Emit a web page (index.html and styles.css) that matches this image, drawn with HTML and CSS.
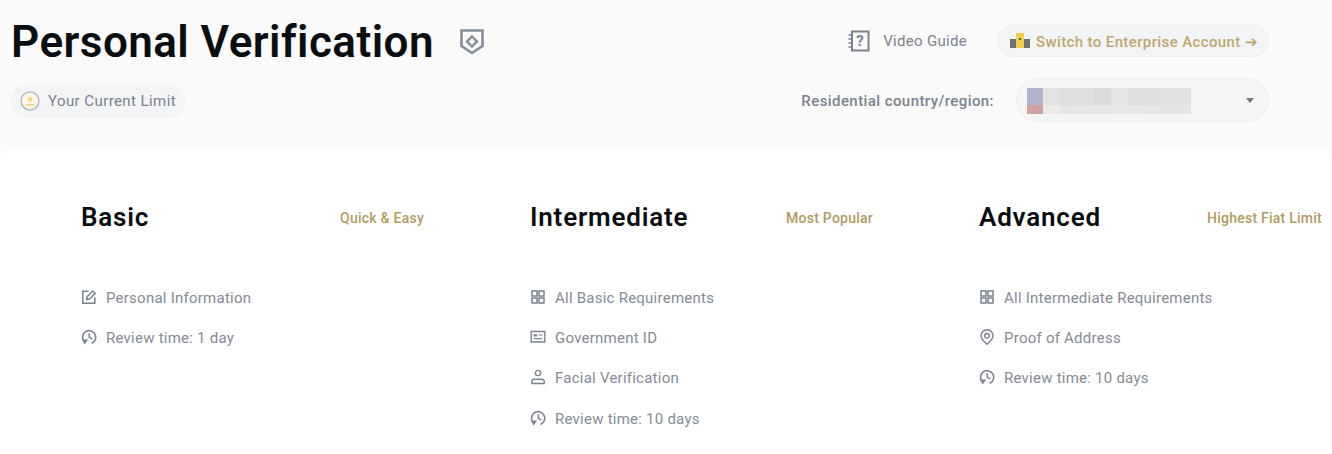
FILE: index.html
```html
<!DOCTYPE html>
<html>

<head>
    <meta charset="UTF-8">
    <title>Personal Verification</title>
    <link rel="stylesheet" href="styles.css">
</head>

<body>
    <svg class="icon-defs" width="0" height="0">
        <symbol id="i-edit" viewBox="0 0 16 16">
            <path d="M7.500 2.200H1.800v12h12V8.500" fill="none" stroke="currentColor" stroke-width="1.600" />
            <path d="M5.600 10.600l.5-3 5.600-5.600 2.500 2.500-5.600 5.600z" fill="none" stroke="currentColor" stroke-width="1.500" />
        </symbol>
        <symbol id="i-clock" viewBox="0 0 16 16">
            <path d="M3.700 13.200A6.600 6.600 0 1 1 10.500 14.400" fill="none" stroke="currentColor" stroke-width="1.600" />
            <path d="M1 10.400l6.200.2-3.600 5z" fill="currentColor" />
            <path d="M8.200 4.200v4l3 2" fill="none" stroke="currentColor" stroke-width="1.500" />
        </symbol>
        <symbol id="i-grid" viewBox="0 0 16 16">
            <path d="M2 2h5v5H2zM9 2h5v5H9zM2 9h5v5H2zM9 9h5v5H9z" fill="none" stroke="currentColor" stroke-width="1.500" />
        </symbol>
        <symbol id="i-card" viewBox="0 0 16 16">
            <path d="M1.200 2.500h13.600v10.500H1.200z" fill="none" stroke="currentColor" stroke-width="1.400" />
            <path d="M3.600 5.200h3.400v2.200H3.600zM8.400 5.400h4v1.200h-4zM3.600 9h8.800v1.200H3.600z" fill="currentColor" />
        </symbol>
        <symbol id="i-user" viewBox="0 0 16 16">
            <circle cx="8" cy="4" r="2.600" fill="none" stroke="currentColor" stroke-width="1.400" />
            <path d="M1.800 14.500v-2c0-1.300 1-2.300 2.300-2.300h7.800c1.300 0 2.300 1 2.300 2.300v2z" fill="none" stroke="currentColor" stroke-width="1.400" />
        </symbol>
        <symbol id="i-pin" viewBox="0 0 16 16">
            <path d="M8 15.200C4.800 12.600 2 10 2 6.800a6 6 0 0 1 12 0C14 10 11.200 12.600 8 15.200z" fill="none" stroke="currentColor" stroke-width="1.400" />
            <circle cx="8" cy="6.800" r="2.300" fill="none" stroke="currentColor" stroke-width="1.400" />
        </symbol>
    </svg>

    <header class="top">
        <div class="top-row first">
            <div class="title-wrap">
                <h1>Personal Verification</h1>
                <svg class="shield" viewBox="0 0 24 26">
                    <path d="M1.500 1.500h21v15.500L12 24 1.500 17z" fill="none" stroke="#868e9a" stroke-width="2.600" />
                    <path d="M12 7.500l5 5-5 5-5-5z" fill="none" stroke="#868e9a" stroke-width="2.400" />
                </svg>
            </div>
            <div class="top-actions">
                <a class="guide">
                    <svg class="guide-icon" viewBox="0 0 22 22">
                        <path d="M4 1.500h16.500v19H4z" fill="none" stroke="#7b838f" stroke-width="2" />
                        <path d="M0.500 5h4M0.500 9h4M0.500 13h4M0.500 17h4" stroke="#7b838f" stroke-width="1.600" />
                        <text x="12.200" y="16" class="guide-mark">?</text>
                    </svg>
                    <span>Video Guide</span>
                </a>
                <a class="switch-pill">
                    <svg class="building" viewBox="0 0 20 16">
                        <path d="M0 6h6v9H0zM14 6h6v9h-6z" fill="#6f7273" />
                        <path d="M6 0h8v15H6z" fill="#ecd04e" />
                        <path d="M9 5h2v2H9z" fill="#5f5a3a" />
                    </svg>
                    <span class="switch-text">Switch to Enterprise Account ➔</span>
                </a>
            </div>
        </div>
        <div class="top-row second">
            <a class="limit-pill">
                <span class="avatar">
                    <svg viewBox="0 0 20 20">
                        <circle cx="10" cy="10" r="9" fill="#fbf6e4" stroke="#b7bcc4" stroke-width="1.500" />
                        <circle cx="10" cy="8.300" r="2.400" fill="#efd98a" />
                        <path d="M5.800 13h8.400v1.500H5.800z" fill="#efd98a" />
                    </svg>
                </span>
                <span>Your Current Limit</span>
            </a>
            <div class="region">
                <span class="region-label">Residential country/region:</span>
                <div class="region-select">
                    <div class="blur">
                        <div class="blur-flag"><i class="flag-top"></i><i class="flag-bottom"></i></div>
                        <div class="blur-name"></div>
                    </div>
                    <span class="caret"></span>
                </div>
            </div>
        </div>
    </header>

    <main class="levels">
        <section class="level">
            <div class="level-head">
                <h2>Basic</h2>
                <span class="tag">Quick &amp; Easy</span>
            </div>
            <ul>
                <li><svg><use href="#i-edit" /></svg>Personal Information</li>
                <li><svg><use href="#i-clock" /></svg>Review time: 1 day</li>
            </ul>
        </section>
        <section class="level">
            <div class="level-head">
                <h2>Intermediate</h2>
                <span class="tag">Most Popular</span>
            </div>
            <ul>
                <li><svg><use href="#i-grid" /></svg>All Basic Requirements</li>
                <li><svg><use href="#i-card" /></svg>Government ID</li>
                <li><svg><use href="#i-user" /></svg>Facial Verification</li>
                <li class="last"><svg><use href="#i-clock" /></svg>Review time: 10 days</li>
            </ul>
        </section>
        <section class="level">
            <div class="level-head">
                <h2>Advanced</h2>
                <span class="tag">Highest Fiat Limit</span>
            </div>
            <ul>
                <li><svg><use href="#i-grid" /></svg>All Intermediate Requirements</li>
                <li><svg><use href="#i-pin" /></svg>Proof of Address</li>
                <li><svg><use href="#i-clock" /></svg>Review time: 10 days</li>
            </ul>
        </section>
    </main>
</body>

</html>
```

FILE: styles.css
```css
* {
    box-sizing: border-box;
}

html,
body {
    margin: 0;
    height: 454px;
    overflow: hidden;
}

body {
    background-color: #fafafa;
    font-family: "Roboto", "Liberation Sans", sans-serif;
    color: #848e9c;
}

.icon-defs {
    display: block;
}

.top {
    height: 148px;
    padding: 21px 63px 0 10px;
}

.top-row {
    display: flex;
    justify-content: space-between;
    align-items: center;
}

.first {
    height: 42px;
}

.second {
    height: 44px;
    margin-top: 15px;
}

.title-wrap {
    display: flex;
    align-items: center;
    gap: 26px;
    padding-left: 1px;
}

h1 {
    margin: 0;
    font-size: 44px;
    line-height: 42px;
    font-weight: 600;
    letter-spacing: .45px;
    color: #0b0e11;
    white-space: nowrap;
}

.shield {
    width: 24px;
    height: 26px;
}

.top-actions {
    display: flex;
    align-items: center;
    gap: 30px;
}

.guide {
    display: flex;
    align-items: center;
    gap: 13px;
    font-size: 15px;
    letter-spacing: .3px;
    color: #7b838f;
    margin-top: -2px;
}

.guide-icon {
    width: 22px;
    height: 22px;
}

.guide-mark {
    font-size: 15px;
    font-weight: 700;
    fill: #7b838f;
    text-anchor: middle;
}

.switch-pill {
    display: flex;
    align-items: center;
    gap: 6px;
    width: 272px;
    height: 33px;
    padding-left: 12px;
    border: 1px solid #eceef0;
    border-radius: 17px;
    background-color: #f3f4f5;
    font-size: 15px;
    font-weight: 500;
    letter-spacing: .38px;
    color: #bfa76f;
    white-space: nowrap;
    margin-top: -3px;
}

.switch-text {
    padding-top: 2px;
}

.building {
    width: 20px;
    height: 16px;
}

.limit-pill {
    display: flex;
    align-items: center;
    gap: 8px;
    width: 176px;
    height: 33px;
    padding-left: 10px;
    border-radius: 17px;
    background-color: #f3f4f6;
    font-size: 15px;
    letter-spacing: .42px;
    color: #7b838f;
    white-space: nowrap;
    margin-top: 2px;
}

.avatar,
.avatar svg {
    display: block;
    width: 20px;
    height: 20px;
}

.region {
    display: flex;
    align-items: center;
    gap: 22px;
}

.region-label {
    font-size: 15px;
    font-weight: 500;
    letter-spacing: .42px;
    color: #7b838f;
    margin-top: 2px;
}

.region-select {
    display: flex;
    align-items: center;
    justify-content: space-between;
    width: 253px;
    height: 44px;
    padding: 0 14px 0 10px;
    border: 1px solid #eeeeef;
    border-radius: 22px;
    background-color: #f5f5f5;
}

.blur {
    display: flex;
    width: 164px;
    height: 26px;
    margin-top: 1px;
}

.blur-flag {
    display: flex;
    flex-direction: column;
    width: 16px;
}

.flag-top {
    height: 17px;
    background-color: #b2b4cc;
}

.flag-bottom {
    height: 9px;
    background-color: #d0a0a0;
}

/* pixelated name, two rows of blocks */
.blur-name {
    flex: 1;
    background-color: #e4e4e4;
    background-image:
        linear-gradient(to right, #e2e2e3 0 17px, #dedede 17px 34px, #dfdfdf 34px 51px, #dcdcda 51px 68px, #e4e4e5 68px 85px, #dfdddf 85px 102px, #dfdfe0 102px 119px, #e3e1de 119px 136px, #e1e1e1 136px),
        linear-gradient(to right, #ece9e9 0 17px, #e6e4e4 17px 34px, #e6e6e6 34px 68px, #e7e7e7 68px 102px, #e6e6e6 102px 119px, #e4e3e1 119px 136px, #e5e5e7 136px);
    background-repeat: no-repeat;
    background-size: 100% 17px, 100% 9px;
    background-position: top, bottom;
}

.caret {
    width: 0;
    height: 0;
    border-left: 4px solid transparent;
    border-right: 4px solid transparent;
    border-top: 5px solid #6f7680;
}

.levels {
    display: grid;
    grid-template-columns: repeat(3, 343px);
    column-gap: 106px;
    height: 306px;
    padding: 48px 0 0 81px;
    border-radius: 20px 20px 0 0 / 8px 8px 0 0;
    background-color: #fff;
}

.level-head {
    display: flex;
    justify-content: space-between;
    align-items: center;
    height: 42px;
}

h2 {
    margin: 0;
    font-size: 26px;
    font-weight: 600;
    letter-spacing: .8px;
    color: #0b0e11;
}

.tag {
    font-size: 14px;
    font-weight: 500;
    letter-spacing: .24px;
    color: #b09b62;
    margin-top: 2px;
}

ul {
    margin: 40px 0 0;
    padding: 0;
    list-style: none;
}

li {
    display: flex;
    align-items: center;
    gap: 9px;
    height: 40px;
    font-size: 15px;
    letter-spacing: .24px;
    color: #858b94;
    white-space: nowrap;
}

li.last {
    margin-top: 1px;
}

li svg {
    width: 16px;
    height: 16px;
    color: #7b838f;
    margin-top: -3px;
}
```
